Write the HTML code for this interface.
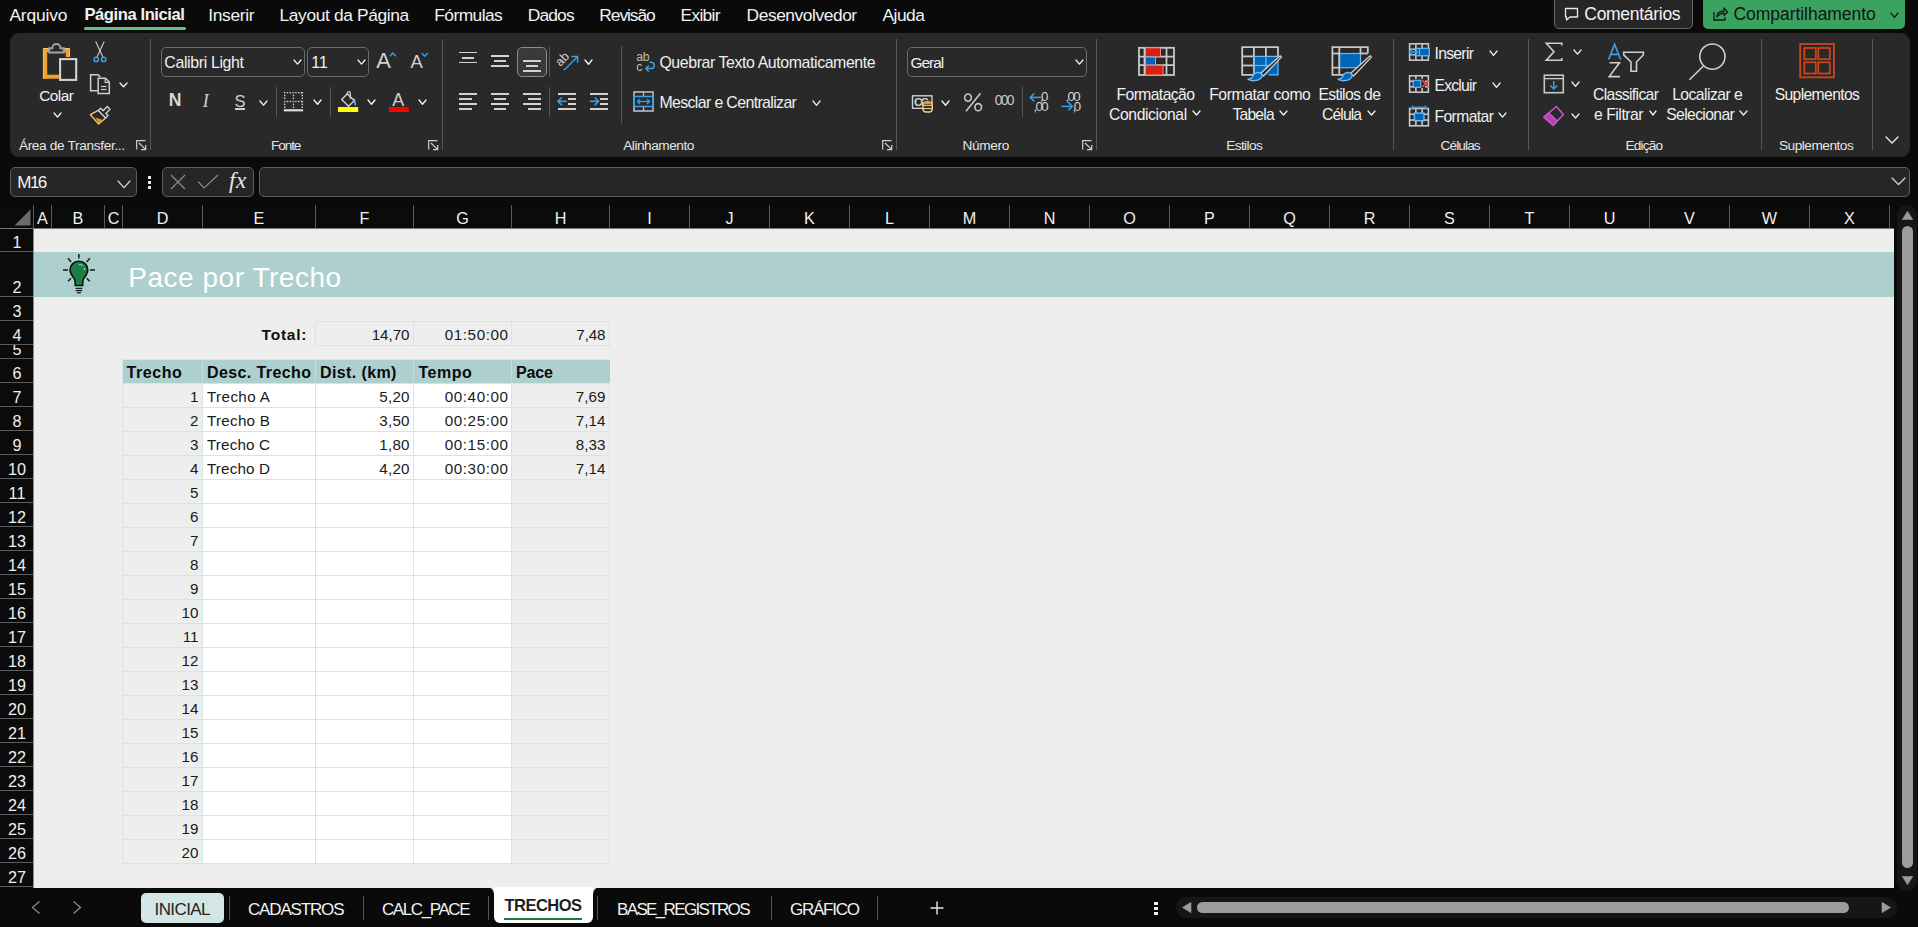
<!DOCTYPE html>
<html><head><meta charset="utf-8"><title>Excel</title>
<style>
html,body{margin:0;padding:0;width:1918px;height:927px;overflow:hidden;background:#0a0a0a;font-family:"Liberation Sans",sans-serif}
.t{position:absolute;line-height:1;white-space:nowrap}
svg{overflow:visible}
</style></head><body>
<div class="t" style="left:9.40px;top:6.81px;font-size:17.4px;color:#f2f2f2;letter-spacing:-0.166px;">Arquivo</div><div class="t" style="left:84.40px;top:7.49px;font-size:16.6px;color:#f2f2f2;font-weight:bold;letter-spacing:-0.423px;">Página Inicial</div><div class="t" style="left:208.20px;top:6.81px;font-size:17.4px;color:#f2f2f2;letter-spacing:-0.307px;">Inserir</div><div class="t" style="left:279.50px;top:6.81px;font-size:17.4px;color:#f2f2f2;letter-spacing:-0.376px;">Layout da Página</div><div class="t" style="left:434.30px;top:6.81px;font-size:17.4px;color:#f2f2f2;letter-spacing:-0.574px;">Fórmulas</div><div class="t" style="left:527.70px;top:6.81px;font-size:17.4px;color:#f2f2f2;letter-spacing:-0.824px;">Dados</div><div class="t" style="left:599.30px;top:6.81px;font-size:17.4px;color:#f2f2f2;letter-spacing:-1.06px;">Revisão</div><div class="t" style="left:680.50px;top:6.81px;font-size:17.4px;color:#f2f2f2;letter-spacing:-0.702px;">Exibir</div><div class="t" style="left:746.60px;top:6.81px;font-size:17.4px;color:#f2f2f2;letter-spacing:-0.455px;">Desenvolvedor</div><div class="t" style="left:882.40px;top:6.81px;font-size:17.4px;color:#f2f2f2;letter-spacing:-0.476px;">Ajuda</div><div style="position:absolute;left:84px;top:27px;width:102px;height:3px;background:#5fc386;border-radius:2px"></div><div style="position:absolute;left:1554px;top:-6px;width:139px;height:35px;background:#262626;border:1px solid #6a6a6a;border-radius:5px;box-sizing:border-box"></div><svg style="position:absolute;left:1564px;top:7px" width="15" height="14" viewBox="0 0 15 14"><path d="M1.5 1.5h12v8.5h-7.5l-3.5 3v-3h-1z" fill="none" stroke="#e8e8e8" stroke-width="1.3" stroke-linejoin="round"/></svg><div class="t" style="left:1584.30px;top:5.52px;font-size:17.5px;color:#f2f2f2;letter-spacing:-0.291px;">Comentários</div><div style="position:absolute;left:1703px;top:-6px;width:202px;height:35px;background:#3aa35f;border-radius:5px"></div><svg style="position:absolute;left:1713px;top:6px" width="15" height="15" viewBox="0 0 15 15"><path d="M1 6v8h11v-3" fill="none" stroke="#1a1a1a" stroke-width="1.3"/><path d="M4 11c0-4 3-6 7-6V2l3.5 4L11 9.5V7c-3 0-5 1.5-7 4z" fill="none" stroke="#1a1a1a" stroke-width="1.3" stroke-linejoin="round"/></svg><div class="t" style="left:1733.50px;top:5.52px;font-size:17.5px;color:#141414;letter-spacing:-0.046px;">Compartilhamento</div><svg style="position:absolute;left:1891px;top:12.5px" width="7" height="4.300000000000001" viewBox="0 0 7 4.300000000000001"><polyline points="0,0 3.5,4.300000000000001 7,0" fill="none" stroke="#1a1a1a" stroke-width="1.3" stroke-linecap="round" stroke-linejoin="round"/></svg><div style="position:absolute;left:10px;top:33px;width:1900px;height:124px;background:#292929;border-radius:9px"></div><div style="position:absolute;left:150px;top:39px;width:1px;height:111px;background:#555555;"></div><div style="position:absolute;left:442px;top:39px;width:1px;height:111px;background:#555555;"></div><div style="position:absolute;left:896px;top:39px;width:1px;height:111px;background:#555555;"></div><div style="position:absolute;left:1096px;top:39px;width:1px;height:111px;background:#555555;"></div><div style="position:absolute;left:1393px;top:39px;width:1px;height:111px;background:#555555;"></div><div style="position:absolute;left:1528px;top:39px;width:1px;height:111px;background:#555555;"></div><div style="position:absolute;left:1761px;top:39px;width:1px;height:111px;background:#555555;"></div><div style="position:absolute;left:1872px;top:39px;width:1px;height:111px;background:#555555;"></div><div style="position:absolute;left:10px;top:167px;width:127px;height:30px;background:#262626;background:#262626;border:1px solid #5c5c5c;border-radius:5px;box-sizing:border-box"></div><div class="t" style="left:17.30px;top:173.85px;font-size:17px;color:#f2f2f2;letter-spacing:-1.535px;">M16</div><svg style="position:absolute;left:117.5px;top:180.5px" width="12.0" height="6.699999999999989" viewBox="0 0 12.0 6.699999999999989"><polyline points="0,0 6.0,6.699999999999989 12.0,0" fill="none" stroke="#d8d8d8" stroke-width="1.2" stroke-linecap="round" stroke-linejoin="round"/></svg><div style="position:absolute;left:148px;top:176px;width:3px;height:3px;background:#e8e8e8;"></div><div style="position:absolute;left:148px;top:181px;width:3px;height:3px;background:#e8e8e8;"></div><div style="position:absolute;left:148px;top:186px;width:3px;height:3px;background:#e8e8e8;"></div><div style="position:absolute;left:162px;top:167px;width:92px;height:30px;background:#262626;background:#262626;border:1px solid #5c5c5c;border-radius:5px;box-sizing:border-box"></div><svg style="position:absolute;left:170px;top:174px" width="16" height="16" viewBox="0 0 16 16"><path d="M1 1L15 15M15 1L1 15" stroke="#8a8a8a" stroke-width="1.2" fill="none"/></svg><svg style="position:absolute;left:197px;top:174px" width="22" height="15" viewBox="0 0 22 15"><path d="M1 7.5L7 14L21 1" stroke="#8a8a8a" stroke-width="1.2" fill="none"/></svg><div class="t" style="left:229.00px;top:168.85px;font-size:23px;color:#e8e8e8;font-family:'Liberation Serif';font-style:italic;letter-spacing:0.6px;">fx</div><div style="position:absolute;left:259px;top:167px;width:1651px;height:30px;background:#262626;background:#262626;border:1px solid #5c5c5c;border-radius:5px;box-sizing:border-box"></div><svg style="position:absolute;left:1891.5px;top:177.5px" width="13.0" height="6.5" viewBox="0 0 13.0 6.5"><polyline points="0,0 6.5,6.5 13.0,0" fill="none" stroke="#d8d8d8" stroke-width="1.2" stroke-linecap="round" stroke-linejoin="round"/></svg><div style="position:absolute;left:0px;top:205px;width:1894px;height:24px;background:#0b0b0b;"></div><svg style="position:absolute;left:14px;top:209px" width="17" height="17" viewBox="0 0 17 17"><path d="M16.5 0.5V16.5H0.5Z" fill="#6b6b6b"/></svg><div style="position:absolute;left:33px;top:205px;width:1px;height:23px;background:#5a5a5a;"></div><div class="t" style="left:42.50px;top:209.83px;font-size:16.2px;color:#f0f0f0;transform:translateX(-50%);">A</div><div style="position:absolute;left:51px;top:205px;width:1px;height:23px;background:#5a5a5a;"></div><div class="t" style="left:78.00px;top:209.83px;font-size:16.2px;color:#f0f0f0;transform:translateX(-50%);">B</div><div style="position:absolute;left:104px;top:205px;width:1px;height:23px;background:#5a5a5a;"></div><div class="t" style="left:113.50px;top:209.83px;font-size:16.2px;color:#f0f0f0;transform:translateX(-50%);">C</div><div style="position:absolute;left:122px;top:205px;width:1px;height:23px;background:#5a5a5a;"></div><div class="t" style="left:162.50px;top:209.83px;font-size:16.2px;color:#f0f0f0;transform:translateX(-50%);">D</div><div style="position:absolute;left:202px;top:205px;width:1px;height:23px;background:#5a5a5a;"></div><div class="t" style="left:259.00px;top:209.83px;font-size:16.2px;color:#f0f0f0;transform:translateX(-50%);">E</div><div style="position:absolute;left:315px;top:205px;width:1px;height:23px;background:#5a5a5a;"></div><div class="t" style="left:364.50px;top:209.83px;font-size:16.2px;color:#f0f0f0;transform:translateX(-50%);">F</div><div style="position:absolute;left:413px;top:205px;width:1px;height:23px;background:#5a5a5a;"></div><div class="t" style="left:462.50px;top:209.83px;font-size:16.2px;color:#f0f0f0;transform:translateX(-50%);">G</div><div style="position:absolute;left:511px;top:205px;width:1px;height:23px;background:#5a5a5a;"></div><div class="t" style="left:560.50px;top:209.83px;font-size:16.2px;color:#f0f0f0;transform:translateX(-50%);">H</div><div style="position:absolute;left:609px;top:205px;width:1px;height:23px;background:#5a5a5a;"></div><div class="t" style="left:649.50px;top:209.83px;font-size:16.2px;color:#f0f0f0;transform:translateX(-50%);">I</div><div style="position:absolute;left:689px;top:205px;width:1px;height:23px;background:#5a5a5a;"></div><div class="t" style="left:729.50px;top:209.83px;font-size:16.2px;color:#f0f0f0;transform:translateX(-50%);">J</div><div style="position:absolute;left:769px;top:205px;width:1px;height:23px;background:#5a5a5a;"></div><div class="t" style="left:809.50px;top:209.83px;font-size:16.2px;color:#f0f0f0;transform:translateX(-50%);">K</div><div style="position:absolute;left:849px;top:205px;width:1px;height:23px;background:#5a5a5a;"></div><div class="t" style="left:889.50px;top:209.83px;font-size:16.2px;color:#f0f0f0;transform:translateX(-50%);">L</div><div style="position:absolute;left:929px;top:205px;width:1px;height:23px;background:#5a5a5a;"></div><div class="t" style="left:969.50px;top:209.83px;font-size:16.2px;color:#f0f0f0;transform:translateX(-50%);">M</div><div style="position:absolute;left:1009px;top:205px;width:1px;height:23px;background:#5a5a5a;"></div><div class="t" style="left:1049.50px;top:209.83px;font-size:16.2px;color:#f0f0f0;transform:translateX(-50%);">N</div><div style="position:absolute;left:1089px;top:205px;width:1px;height:23px;background:#5a5a5a;"></div><div class="t" style="left:1129.50px;top:209.83px;font-size:16.2px;color:#f0f0f0;transform:translateX(-50%);">O</div><div style="position:absolute;left:1169px;top:205px;width:1px;height:23px;background:#5a5a5a;"></div><div class="t" style="left:1209.50px;top:209.83px;font-size:16.2px;color:#f0f0f0;transform:translateX(-50%);">P</div><div style="position:absolute;left:1249px;top:205px;width:1px;height:23px;background:#5a5a5a;"></div><div class="t" style="left:1289.50px;top:209.83px;font-size:16.2px;color:#f0f0f0;transform:translateX(-50%);">Q</div><div style="position:absolute;left:1329px;top:205px;width:1px;height:23px;background:#5a5a5a;"></div><div class="t" style="left:1369.50px;top:209.83px;font-size:16.2px;color:#f0f0f0;transform:translateX(-50%);">R</div><div style="position:absolute;left:1409px;top:205px;width:1px;height:23px;background:#5a5a5a;"></div><div class="t" style="left:1449.50px;top:209.83px;font-size:16.2px;color:#f0f0f0;transform:translateX(-50%);">S</div><div style="position:absolute;left:1489px;top:205px;width:1px;height:23px;background:#5a5a5a;"></div><div class="t" style="left:1529.50px;top:209.83px;font-size:16.2px;color:#f0f0f0;transform:translateX(-50%);">T</div><div style="position:absolute;left:1569px;top:205px;width:1px;height:23px;background:#5a5a5a;"></div><div class="t" style="left:1609.50px;top:209.83px;font-size:16.2px;color:#f0f0f0;transform:translateX(-50%);">U</div><div style="position:absolute;left:1649px;top:205px;width:1px;height:23px;background:#5a5a5a;"></div><div class="t" style="left:1689.50px;top:209.83px;font-size:16.2px;color:#f0f0f0;transform:translateX(-50%);">V</div><div style="position:absolute;left:1729px;top:205px;width:1px;height:23px;background:#5a5a5a;"></div><div class="t" style="left:1769.50px;top:209.83px;font-size:16.2px;color:#f0f0f0;transform:translateX(-50%);">W</div><div style="position:absolute;left:1809px;top:205px;width:1px;height:23px;background:#5a5a5a;"></div><div class="t" style="left:1849.50px;top:209.83px;font-size:16.2px;color:#f0f0f0;transform:translateX(-50%);">X</div><div style="position:absolute;left:1889px;top:205px;width:1px;height:23px;background:#5a5a5a;"></div><div style="position:absolute;left:0px;top:228px;width:1894px;height:1px;background:#777777;"></div><div style="position:absolute;left:0px;top:229px;width:33px;height:659px;background:#0b0b0b;"></div><div style="position:absolute;left:0;top:229px;width:33px;height:23px;overflow:hidden"><div class="t" style="left:0;width:33px;text-align:center;top:4.63px;font-size:16.2px;color:#f0f0f0;padding-left:1px;box-sizing:border-box">1</div></div><div style="position:absolute;left:0px;top:251px;width:33px;height:1px;background:#5c5c5c;"></div><div style="position:absolute;left:0;top:252px;width:33px;height:45px;overflow:hidden"><div class="t" style="left:0;width:33px;text-align:center;top:26.63px;font-size:16.2px;color:#f0f0f0;padding-left:1px;box-sizing:border-box">2</div></div><div style="position:absolute;left:0px;top:296px;width:33px;height:1px;background:#5c5c5c;"></div><div style="position:absolute;left:0;top:297px;width:33px;height:24px;overflow:hidden"><div class="t" style="left:0;width:33px;text-align:center;top:5.63px;font-size:16.2px;color:#f0f0f0;padding-left:1px;box-sizing:border-box">3</div></div><div style="position:absolute;left:0px;top:320px;width:33px;height:1px;background:#5c5c5c;"></div><div style="position:absolute;left:0;top:321px;width:33px;height:24px;overflow:hidden"><div class="t" style="left:0;width:33px;text-align:center;top:5.63px;font-size:16.2px;color:#f0f0f0;padding-left:1px;box-sizing:border-box">4</div></div><div style="position:absolute;left:0px;top:344px;width:33px;height:1px;background:#5c5c5c;"></div><div style="position:absolute;left:0;top:345px;width:33px;height:14px;overflow:hidden"><div class="t" style="left:0;width:33px;text-align:center;top:-4.37px;font-size:16.2px;color:#f0f0f0;padding-left:1px;box-sizing:border-box">5</div></div><div style="position:absolute;left:0px;top:358px;width:33px;height:1px;background:#5c5c5c;"></div><div style="position:absolute;left:0;top:359px;width:33px;height:24px;overflow:hidden"><div class="t" style="left:0;width:33px;text-align:center;top:5.63px;font-size:16.2px;color:#f0f0f0;padding-left:1px;box-sizing:border-box">6</div></div><div style="position:absolute;left:0px;top:382px;width:33px;height:1px;background:#5c5c5c;"></div><div style="position:absolute;left:0;top:383px;width:33px;height:24px;overflow:hidden"><div class="t" style="left:0;width:33px;text-align:center;top:5.63px;font-size:16.2px;color:#f0f0f0;padding-left:1px;box-sizing:border-box">7</div></div><div style="position:absolute;left:0px;top:406px;width:33px;height:1px;background:#5c5c5c;"></div><div style="position:absolute;left:0;top:407px;width:33px;height:24px;overflow:hidden"><div class="t" style="left:0;width:33px;text-align:center;top:5.63px;font-size:16.2px;color:#f0f0f0;padding-left:1px;box-sizing:border-box">8</div></div><div style="position:absolute;left:0px;top:430px;width:33px;height:1px;background:#5c5c5c;"></div><div style="position:absolute;left:0;top:431px;width:33px;height:24px;overflow:hidden"><div class="t" style="left:0;width:33px;text-align:center;top:5.63px;font-size:16.2px;color:#f0f0f0;padding-left:1px;box-sizing:border-box">9</div></div><div style="position:absolute;left:0px;top:454px;width:33px;height:1px;background:#5c5c5c;"></div><div style="position:absolute;left:0;top:455px;width:33px;height:24px;overflow:hidden"><div class="t" style="left:0;width:33px;text-align:center;top:5.63px;font-size:16.2px;color:#f0f0f0;padding-left:1px;box-sizing:border-box">10</div></div><div style="position:absolute;left:0px;top:478px;width:33px;height:1px;background:#5c5c5c;"></div><div style="position:absolute;left:0;top:479px;width:33px;height:24px;overflow:hidden"><div class="t" style="left:0;width:33px;text-align:center;top:5.63px;font-size:16.2px;color:#f0f0f0;padding-left:1px;box-sizing:border-box">11</div></div><div style="position:absolute;left:0px;top:502px;width:33px;height:1px;background:#5c5c5c;"></div><div style="position:absolute;left:0;top:503px;width:33px;height:24px;overflow:hidden"><div class="t" style="left:0;width:33px;text-align:center;top:5.63px;font-size:16.2px;color:#f0f0f0;padding-left:1px;box-sizing:border-box">12</div></div><div style="position:absolute;left:0px;top:526px;width:33px;height:1px;background:#5c5c5c;"></div><div style="position:absolute;left:0;top:527px;width:33px;height:24px;overflow:hidden"><div class="t" style="left:0;width:33px;text-align:center;top:5.63px;font-size:16.2px;color:#f0f0f0;padding-left:1px;box-sizing:border-box">13</div></div><div style="position:absolute;left:0px;top:550px;width:33px;height:1px;background:#5c5c5c;"></div><div style="position:absolute;left:0;top:551px;width:33px;height:24px;overflow:hidden"><div class="t" style="left:0;width:33px;text-align:center;top:5.63px;font-size:16.2px;color:#f0f0f0;padding-left:1px;box-sizing:border-box">14</div></div><div style="position:absolute;left:0px;top:574px;width:33px;height:1px;background:#5c5c5c;"></div><div style="position:absolute;left:0;top:575px;width:33px;height:24px;overflow:hidden"><div class="t" style="left:0;width:33px;text-align:center;top:5.63px;font-size:16.2px;color:#f0f0f0;padding-left:1px;box-sizing:border-box">15</div></div><div style="position:absolute;left:0px;top:598px;width:33px;height:1px;background:#5c5c5c;"></div><div style="position:absolute;left:0;top:599px;width:33px;height:24px;overflow:hidden"><div class="t" style="left:0;width:33px;text-align:center;top:5.63px;font-size:16.2px;color:#f0f0f0;padding-left:1px;box-sizing:border-box">16</div></div><div style="position:absolute;left:0px;top:622px;width:33px;height:1px;background:#5c5c5c;"></div><div style="position:absolute;left:0;top:623px;width:33px;height:24px;overflow:hidden"><div class="t" style="left:0;width:33px;text-align:center;top:5.63px;font-size:16.2px;color:#f0f0f0;padding-left:1px;box-sizing:border-box">17</div></div><div style="position:absolute;left:0px;top:646px;width:33px;height:1px;background:#5c5c5c;"></div><div style="position:absolute;left:0;top:647px;width:33px;height:24px;overflow:hidden"><div class="t" style="left:0;width:33px;text-align:center;top:5.63px;font-size:16.2px;color:#f0f0f0;padding-left:1px;box-sizing:border-box">18</div></div><div style="position:absolute;left:0px;top:670px;width:33px;height:1px;background:#5c5c5c;"></div><div style="position:absolute;left:0;top:671px;width:33px;height:24px;overflow:hidden"><div class="t" style="left:0;width:33px;text-align:center;top:5.63px;font-size:16.2px;color:#f0f0f0;padding-left:1px;box-sizing:border-box">19</div></div><div style="position:absolute;left:0px;top:694px;width:33px;height:1px;background:#5c5c5c;"></div><div style="position:absolute;left:0;top:695px;width:33px;height:24px;overflow:hidden"><div class="t" style="left:0;width:33px;text-align:center;top:5.63px;font-size:16.2px;color:#f0f0f0;padding-left:1px;box-sizing:border-box">20</div></div><div style="position:absolute;left:0px;top:718px;width:33px;height:1px;background:#5c5c5c;"></div><div style="position:absolute;left:0;top:719px;width:33px;height:24px;overflow:hidden"><div class="t" style="left:0;width:33px;text-align:center;top:5.63px;font-size:16.2px;color:#f0f0f0;padding-left:1px;box-sizing:border-box">21</div></div><div style="position:absolute;left:0px;top:742px;width:33px;height:1px;background:#5c5c5c;"></div><div style="position:absolute;left:0;top:743px;width:33px;height:24px;overflow:hidden"><div class="t" style="left:0;width:33px;text-align:center;top:5.63px;font-size:16.2px;color:#f0f0f0;padding-left:1px;box-sizing:border-box">22</div></div><div style="position:absolute;left:0px;top:766px;width:33px;height:1px;background:#5c5c5c;"></div><div style="position:absolute;left:0;top:767px;width:33px;height:24px;overflow:hidden"><div class="t" style="left:0;width:33px;text-align:center;top:5.63px;font-size:16.2px;color:#f0f0f0;padding-left:1px;box-sizing:border-box">23</div></div><div style="position:absolute;left:0px;top:790px;width:33px;height:1px;background:#5c5c5c;"></div><div style="position:absolute;left:0;top:791px;width:33px;height:24px;overflow:hidden"><div class="t" style="left:0;width:33px;text-align:center;top:5.63px;font-size:16.2px;color:#f0f0f0;padding-left:1px;box-sizing:border-box">24</div></div><div style="position:absolute;left:0px;top:814px;width:33px;height:1px;background:#5c5c5c;"></div><div style="position:absolute;left:0;top:815px;width:33px;height:24px;overflow:hidden"><div class="t" style="left:0;width:33px;text-align:center;top:5.63px;font-size:16.2px;color:#f0f0f0;padding-left:1px;box-sizing:border-box">25</div></div><div style="position:absolute;left:0px;top:838px;width:33px;height:1px;background:#5c5c5c;"></div><div style="position:absolute;left:0;top:839px;width:33px;height:24px;overflow:hidden"><div class="t" style="left:0;width:33px;text-align:center;top:5.63px;font-size:16.2px;color:#f0f0f0;padding-left:1px;box-sizing:border-box">26</div></div><div style="position:absolute;left:0px;top:862px;width:33px;height:1px;background:#5c5c5c;"></div><div style="position:absolute;left:0;top:863px;width:33px;height:24px;overflow:hidden"><div class="t" style="left:0;width:33px;text-align:center;top:5.63px;font-size:16.2px;color:#f0f0f0;padding-left:1px;box-sizing:border-box">27</div></div><div style="position:absolute;left:0px;top:886px;width:33px;height:1px;background:#5c5c5c;"></div><div style="position:absolute;left:33px;top:229px;width:1px;height:659px;background:#8a8a8a;"></div><div style="position:absolute;left:34px;top:229px;width:1860px;height:659px;background:#eeeeee;"></div><div style="position:absolute;left:34px;top:252px;width:1860px;height:45px;background:#adcfce;"></div><svg style="position:absolute;left:58px;top:252px" width="42" height="45" viewBox="0 0 42 45">
<g stroke="#222" stroke-width="1.6" stroke-linecap="butt">
<line x1="20.9" y1="2" x2="20.9" y2="6.6"/>
<line x1="5" y1="18" x2="10" y2="18"/><line x1="32" y1="18" x2="37" y2="18"/>
<line x1="10" y1="6.3" x2="13.1" y2="10"/><line x1="31.8" y1="6.3" x2="28.7" y2="10"/>
<line x1="10" y1="29.3" x2="13.1" y2="26.2"/><line x1="31.8" y1="29.3" x2="28.7" y2="26.2"/>
</g>
<path d="M20.9 9.3 C15.6 9.3 12 13.2 12 18 C12 21.5 14 23.5 16 26.2 C17 27.6 17.2 29 17.2 31 L17.2 33.6 L24.7 33.6 L24.7 31 C24.7 29 24.9 27.6 25.9 26.2 C27.9 23.5 29.8 21.5 29.8 18 C29.8 13.2 26.2 9.3 20.9 9.3 Z" fill="#1a7f48" stroke="#0c0c0c" stroke-width="1.5"/>
<path d="M21 12.5 C23 12.6 24.3 13.2 25.2 14.2" stroke="#cfe8d8" stroke-width="0.9" fill="none"/>
<path d="M26.3 16 L26.8 18.2" stroke="#cfe8d8" stroke-width="0.9" fill="none"/>
<g stroke="#1e1e1e" stroke-width="1.3"><line x1="17.6" y1="36.4" x2="24.2" y2="36.4"/><line x1="17.6" y1="38.6" x2="24.2" y2="38.6"/><line x1="19" y1="40.8" x2="22.8" y2="40.8"/></g>
</svg><div class="t" style="left:128.20px;top:263.80px;font-size:28px;color:#ffffff;letter-spacing:0.539px;">Pace por Trecho</div><div class="t" style="right:1610.73px;top:327.02px;font-size:15.5px;color:#111;font-weight:bold;letter-spacing:0.773px;">Total:</div><div style="position:absolute;left:315px;top:321px;width:295px;height:25px;background:transparent;border:1px solid #d3e6e5;box-sizing:border-box"></div><div style="position:absolute;left:413px;top:321px;width:1px;height:25px;background:#d3e6e5;"></div><div style="position:absolute;left:511px;top:321px;width:1px;height:25px;background:#d3e6e5;"></div><div class="t" style="right:1508.53px;top:327.28px;font-size:15.2px;color:#1a1a1a;letter-spacing:-0.034px;">14,70</div><div class="t" style="right:1409.39px;top:327.28px;font-size:15.2px;color:#1a1a1a;letter-spacing:0.605px;">01:50:00</div><div class="t" style="right:1312.63px;top:327.28px;font-size:15.2px;color:#1a1a1a;letter-spacing:-0.128px;">7,48</div><div style="position:absolute;left:122px;top:359px;width:488px;height:1px;background:#d3e6e5;"></div><div style="position:absolute;left:122px;top:359px;width:1px;height:24px;background:#d3e6e5;"></div><div style="position:absolute;left:123px;top:360px;width:487px;height:23px;background:#adcfce;"></div><div style="position:absolute;left:202px;top:359px;width:1px;height:24px;background:#c2dcdb;"></div><div style="position:absolute;left:315px;top:359px;width:1px;height:24px;background:#c2dcdb;"></div><div style="position:absolute;left:413px;top:359px;width:1px;height:24px;background:#c2dcdb;"></div><div style="position:absolute;left:511px;top:359px;width:1px;height:24px;background:#c2dcdb;"></div><div class="t" style="left:126.50px;top:364.60px;font-size:16px;color:#0a0a0a;font-weight:bold;letter-spacing:0.568px;">Trecho</div><div class="t" style="left:207.00px;top:364.60px;font-size:16px;color:#0a0a0a;font-weight:bold;letter-spacing:0.4px;">Desc. Trecho</div><div class="t" style="left:320.00px;top:364.60px;font-size:16px;color:#0a0a0a;font-weight:bold;letter-spacing:0.389px;">Dist. (km)</div><div class="t" style="left:418.50px;top:364.60px;font-size:16px;color:#0a0a0a;font-weight:bold;letter-spacing:0.51px;">Tempo</div><div class="t" style="left:516.00px;top:364.60px;font-size:16px;color:#0a0a0a;font-weight:bold;letter-spacing:-0.189px;">Pace</div><div style="position:absolute;left:202px;top:383px;width:309px;height:480px;background:#ffffff;"></div><div style="position:absolute;left:122px;top:383px;width:488px;height:1px;background:#d3e6e5;"></div><div style="position:absolute;left:122px;top:407px;width:488px;height:1px;background:#d3e6e5;"></div><div style="position:absolute;left:122px;top:431px;width:488px;height:1px;background:#d3e6e5;"></div><div style="position:absolute;left:122px;top:455px;width:488px;height:1px;background:#d3e6e5;"></div><div style="position:absolute;left:122px;top:479px;width:488px;height:1px;background:#d3e6e5;"></div><div style="position:absolute;left:122px;top:503px;width:488px;height:1px;background:#d3e6e5;"></div><div style="position:absolute;left:122px;top:527px;width:488px;height:1px;background:#d3e6e5;"></div><div style="position:absolute;left:122px;top:551px;width:488px;height:1px;background:#d3e6e5;"></div><div style="position:absolute;left:122px;top:575px;width:488px;height:1px;background:#d3e6e5;"></div><div style="position:absolute;left:122px;top:599px;width:488px;height:1px;background:#d3e6e5;"></div><div style="position:absolute;left:122px;top:623px;width:488px;height:1px;background:#d3e6e5;"></div><div style="position:absolute;left:122px;top:647px;width:488px;height:1px;background:#d3e6e5;"></div><div style="position:absolute;left:122px;top:671px;width:488px;height:1px;background:#d3e6e5;"></div><div style="position:absolute;left:122px;top:695px;width:488px;height:1px;background:#d3e6e5;"></div><div style="position:absolute;left:122px;top:719px;width:488px;height:1px;background:#d3e6e5;"></div><div style="position:absolute;left:122px;top:743px;width:488px;height:1px;background:#d3e6e5;"></div><div style="position:absolute;left:122px;top:767px;width:488px;height:1px;background:#d3e6e5;"></div><div style="position:absolute;left:122px;top:791px;width:488px;height:1px;background:#d3e6e5;"></div><div style="position:absolute;left:122px;top:815px;width:488px;height:1px;background:#d3e6e5;"></div><div style="position:absolute;left:122px;top:839px;width:488px;height:1px;background:#d3e6e5;"></div><div style="position:absolute;left:122px;top:863px;width:488px;height:1px;background:#d3e6e5;"></div><div style="position:absolute;left:122px;top:383px;width:1px;height:480px;background:#d3e6e5;"></div><div style="position:absolute;left:202px;top:383px;width:1px;height:480px;background:#d3e6e5;"></div><div style="position:absolute;left:315px;top:383px;width:1px;height:480px;background:#d3e6e5;"></div><div style="position:absolute;left:413px;top:383px;width:1px;height:480px;background:#d3e6e5;"></div><div style="position:absolute;left:511px;top:383px;width:1px;height:480px;background:#d3e6e5;"></div><div style="position:absolute;left:609px;top:383px;width:1px;height:480px;background:#d3e6e5;"></div><div class="t" style="right:1719.50px;top:389.08px;font-size:15.2px;color:#1a1a1a;">1</div><div class="t" style="left:207.00px;top:389.08px;font-size:15.2px;color:#1a1a1a;letter-spacing:0.391px;">Trecho A</div><div class="t" style="right:1508.30px;top:389.08px;font-size:15.2px;color:#1a1a1a;letter-spacing:0.205px;">5,20</div><div class="t" style="right:1409.39px;top:389.08px;font-size:15.2px;color:#1a1a1a;letter-spacing:0.605px;">00:40:00</div><div class="t" style="right:1312.43px;top:389.08px;font-size:15.2px;color:#1a1a1a;letter-spacing:0.072px;">7,69</div><div class="t" style="right:1719.50px;top:413.08px;font-size:15.2px;color:#1a1a1a;">2</div><div class="t" style="left:207.00px;top:413.08px;font-size:15.2px;color:#1a1a1a;letter-spacing:0.271px;">Trecho B</div><div class="t" style="right:1508.30px;top:413.08px;font-size:15.2px;color:#1a1a1a;letter-spacing:0.205px;">3,50</div><div class="t" style="right:1409.39px;top:413.08px;font-size:15.2px;color:#1a1a1a;letter-spacing:0.605px;">00:25:00</div><div class="t" style="right:1312.43px;top:413.08px;font-size:15.2px;color:#1a1a1a;letter-spacing:0.072px;">7,14</div><div class="t" style="right:1719.50px;top:437.08px;font-size:15.2px;color:#1a1a1a;">3</div><div class="t" style="left:207.00px;top:437.08px;font-size:15.2px;color:#1a1a1a;letter-spacing:0.151px;">Trecho C</div><div class="t" style="right:1508.30px;top:437.08px;font-size:15.2px;color:#1a1a1a;letter-spacing:0.205px;">1,80</div><div class="t" style="right:1409.39px;top:437.08px;font-size:15.2px;color:#1a1a1a;letter-spacing:0.605px;">00:15:00</div><div class="t" style="right:1312.43px;top:437.08px;font-size:15.2px;color:#1a1a1a;letter-spacing:0.072px;">8,33</div><div class="t" style="right:1719.50px;top:461.08px;font-size:15.2px;color:#1a1a1a;">4</div><div class="t" style="left:207.00px;top:461.08px;font-size:15.2px;color:#1a1a1a;letter-spacing:0.151px;">Trecho D</div><div class="t" style="right:1508.30px;top:461.08px;font-size:15.2px;color:#1a1a1a;letter-spacing:0.205px;">4,20</div><div class="t" style="right:1409.39px;top:461.08px;font-size:15.2px;color:#1a1a1a;letter-spacing:0.605px;">00:30:00</div><div class="t" style="right:1312.43px;top:461.08px;font-size:15.2px;color:#1a1a1a;letter-spacing:0.072px;">7,14</div><div class="t" style="right:1719.50px;top:485.08px;font-size:15.2px;color:#1a1a1a;">5</div><div class="t" style="right:1719.50px;top:509.08px;font-size:15.2px;color:#1a1a1a;">6</div><div class="t" style="right:1719.50px;top:533.08px;font-size:15.2px;color:#1a1a1a;">7</div><div class="t" style="right:1719.50px;top:557.08px;font-size:15.2px;color:#1a1a1a;">8</div><div class="t" style="right:1719.50px;top:581.08px;font-size:15.2px;color:#1a1a1a;">9</div><div class="t" style="right:1719.50px;top:605.08px;font-size:15.2px;color:#1a1a1a;">10</div><div class="t" style="right:1719.50px;top:629.08px;font-size:15.2px;color:#1a1a1a;">11</div><div class="t" style="right:1719.50px;top:653.08px;font-size:15.2px;color:#1a1a1a;">12</div><div class="t" style="right:1719.50px;top:677.08px;font-size:15.2px;color:#1a1a1a;">13</div><div class="t" style="right:1719.50px;top:701.08px;font-size:15.2px;color:#1a1a1a;">14</div><div class="t" style="right:1719.50px;top:725.08px;font-size:15.2px;color:#1a1a1a;">15</div><div class="t" style="right:1719.50px;top:749.08px;font-size:15.2px;color:#1a1a1a;">16</div><div class="t" style="right:1719.50px;top:773.08px;font-size:15.2px;color:#1a1a1a;">17</div><div class="t" style="right:1719.50px;top:797.08px;font-size:15.2px;color:#1a1a1a;">18</div><div class="t" style="right:1719.50px;top:821.08px;font-size:15.2px;color:#1a1a1a;">19</div><div class="t" style="right:1719.50px;top:845.08px;font-size:15.2px;color:#1a1a1a;">20</div><div style="position:absolute;left:0px;top:888px;width:1918px;height:39px;background:#0a0a0a;"></div><svg style="position:absolute;left:31px;top:901px" width="10" height="13" viewBox="0 0 10 13"><polyline points="8.5,0.5 1.5,6.5 8.5,12.5" fill="none" stroke="#8a8a8a" stroke-width="1.3"/></svg><svg style="position:absolute;left:72px;top:901px" width="10" height="13" viewBox="0 0 10 13"><polyline points="1.5,0.5 8.5,6.5 1.5,12.5" fill="none" stroke="#8a8a8a" stroke-width="1.3"/></svg><div style="position:absolute;left:141px;top:893px;width:83px;height:30px;background:#d3e6e5;border-radius:5px"></div><div class="t" style="left:154.50px;top:901.15px;font-size:17px;color:#1e1e1e;letter-spacing:-0.586px;">INICIAL</div><div style="position:absolute;left:229px;top:896px;width:1px;height:24px;background:#555555;"></div><div style="position:absolute;left:363px;top:896px;width:1px;height:24px;background:#555555;"></div><div style="position:absolute;left:488px;top:896px;width:1px;height:24px;background:#555555;"></div><div style="position:absolute;left:597px;top:896px;width:1px;height:24px;background:#555555;"></div><div style="position:absolute;left:771px;top:896px;width:1px;height:24px;background:#555555;"></div><div style="position:absolute;left:877px;top:896px;width:1px;height:24px;background:#555555;"></div><div class="t" style="left:248.00px;top:901.15px;font-size:17px;color:#f2f2f2;letter-spacing:-1.162px;">CADASTROS</div><div class="t" style="left:382.00px;top:901.15px;font-size:17px;color:#f2f2f2;letter-spacing:-1.417px;">CALC_PACE</div><div class="t" style="left:617.00px;top:901.15px;font-size:17px;color:#f2f2f2;letter-spacing:-1.649px;">BASE_REGISTROS</div><div class="t" style="left:790.00px;top:901.15px;font-size:17px;color:#f2f2f2;letter-spacing:-1.241px;">GRÁFICO</div><div style="position:absolute;left:494px;top:887px;width:99px;height:36px;background:#ffffff;border-radius:0 0 6px 6px"></div><svg style="position:absolute;left:487px;top:887px" width="7" height="7" viewBox="0 0 7 7"><path d="M0 0H7V7A7 7 0 0 0 0 0Z" fill="#eeeeee"/></svg><svg style="position:absolute;left:593px;top:887px" width="7" height="7" viewBox="0 0 7 7"><path d="M7 0H0V7A7 7 0 0 1 7 0Z" fill="#eeeeee"/></svg><div class="t" style="left:504.50px;top:897.48px;font-size:16.5px;color:#1e1e1e;font-weight:bold;letter-spacing:-0.529px;">TRECHOS</div><div style="position:absolute;left:504px;top:918px;width:78px;height:2px;background:#1e7b3e;"></div><svg style="position:absolute;left:930px;top:901px" width="14" height="14" viewBox="0 0 14 14"><path d="M7 0.5V13.5M0.5 7H13.5" stroke="#e8e8e8" stroke-width="1.4"/></svg><div style="position:absolute;left:1154px;top:902px;width:4px;height:3px;background:#f0f0f0;"></div><div style="position:absolute;left:1154px;top:907px;width:4px;height:3px;background:#f0f0f0;"></div><div style="position:absolute;left:1154px;top:912px;width:4px;height:3px;background:#f0f0f0;"></div><div style="position:absolute;left:1176px;top:897px;width:721px;height:21px;background:#161616;border-radius:11px"></div><svg style="position:absolute;left:1182px;top:902px" width="9" height="11" viewBox="0 0 9 11"><path d="M9 0.3V10.7L0.5 5.5Z" fill="#9a9a9a" stroke="#9a9a9a" stroke-width="0.6" stroke-linejoin="round"/></svg><div style="position:absolute;left:1197px;top:902px;width:652px;height:11px;background:#9c9c9c;border-radius:6px"></div><svg style="position:absolute;left:1882px;top:902px" width="9" height="11" viewBox="0 0 9 11"><path d="M0 0.3V10.7L8.5 5.5Z" fill="#9a9a9a" stroke="#9a9a9a" stroke-width="0.6" stroke-linejoin="round"/></svg><div style="position:absolute;left:1897px;top:205px;width:20px;height:686px;background:#161616;border-radius:10px"></div><svg style="position:absolute;left:1902px;top:211px" width="11" height="9" viewBox="0 0 11 9"><path d="M0.3 8.5H10.7L5.5 0.3Z" fill="#9a9a9a" stroke="#9a9a9a" stroke-width="0.6" stroke-linejoin="round"/></svg><div style="position:absolute;left:1902px;top:226px;width:11px;height:642px;background:#9c9c9c;border-radius:6px"></div><svg style="position:absolute;left:1902px;top:876px" width="11" height="9" viewBox="0 0 11 9"><path d="M0.3 0.5H10.7L5.5 8.7Z" fill="#9a9a9a" stroke="#9a9a9a" stroke-width="0.6" stroke-linejoin="round"/></svg><div class="t" style="left:18.90px;top:138.88px;font-size:13.67px;color:#e6e6e6;letter-spacing:-0.342px;">Área de Transfer...</div><div class="t" style="left:623.20px;top:138.88px;font-size:13.67px;color:#e6e6e6;letter-spacing:-0.469px;">Alinhamento</div><div class="t" style="left:962.40px;top:138.88px;font-size:13.67px;color:#e6e6e6;letter-spacing:-0.324px;">Número</div><div class="t" style="left:1226.20px;top:138.88px;font-size:13.67px;color:#e6e6e6;letter-spacing:-0.61px;">Estilos</div><div class="t" style="left:1440.60px;top:138.88px;font-size:13.67px;color:#e6e6e6;letter-spacing:-0.915px;">Células</div><div class="t" style="left:1625.40px;top:138.88px;font-size:13.67px;color:#e6e6e6;letter-spacing:-0.8px;">Edição</div><div class="t" style="left:1779.00px;top:138.88px;font-size:13.67px;color:#e6e6e6;letter-spacing:-0.499px;">Suplementos</div><div class="t" style="left:39.30px;top:87.64px;font-size:15.37px;color:#f0f0f0;letter-spacing:-0.532px;">Colar</div><svg style="position:absolute;left:53.5px;top:112.5px" width="7.0" height="4.0" viewBox="0 0 7.0 4.0"><polyline points="0,0 3.5,4.0 7.0,0" fill="none" stroke="#f0f0f0" stroke-width="1.3" stroke-linecap="round" stroke-linejoin="round"/></svg><div style="position:absolute;left:161px;top:47px;width:144px;height:30px;background:transparent;background:transparent;border:1px solid #6b6b6b;border-radius:5px;box-sizing:border-box"></div><div class="t" style="left:164.30px;top:55.19px;font-size:15.9px;color:#f0f0f0;letter-spacing:-0.355px;">Calibri Light</div><svg style="position:absolute;left:294px;top:60.3px" width="7" height="4.200000000000003" viewBox="0 0 7 4.200000000000003"><polyline points="0,0 3.5,4.200000000000003 7,0" fill="none" stroke="#f0f0f0" stroke-width="1.3" stroke-linecap="round" stroke-linejoin="round"/></svg><div style="position:absolute;left:307px;top:47px;width:62px;height:30px;background:transparent;background:transparent;border:1px solid #6b6b6b;border-radius:5px;box-sizing:border-box"></div><div class="t" style="left:311.30px;top:55.19px;font-size:15.9px;color:#f0f0f0;">11</div><svg style="position:absolute;left:358px;top:60.3px" width="7" height="4.200000000000003" viewBox="0 0 7 4.200000000000003"><polyline points="0,0 3.5,4.200000000000003 7,0" fill="none" stroke="#f0f0f0" stroke-width="1.3" stroke-linecap="round" stroke-linejoin="round"/></svg><div class="t" style="left:659.40px;top:54.98px;font-size:15.9px;color:#f0f0f0;letter-spacing:-0.405px;">Quebrar Texto Automaticamente</div><div class="t" style="left:659.40px;top:94.78px;font-size:15.9px;color:#f0f0f0;letter-spacing:-0.631px;">Mesclar e Centralizar</div><svg style="position:absolute;left:813px;top:100.5px" width="7" height="4.299999999999997" viewBox="0 0 7 4.299999999999997"><polyline points="0,0 3.5,4.299999999999997 7,0" fill="none" stroke="#f0f0f0" stroke-width="1.3" stroke-linecap="round" stroke-linejoin="round"/></svg><div style="position:absolute;left:907px;top:47px;width:180px;height:30px;background:transparent;background:transparent;border:1px solid #6b6b6b;border-radius:5px;box-sizing:border-box"></div><div class="t" style="left:910.50px;top:55.44px;font-size:15.37px;color:#f0f0f0;letter-spacing:-0.971px;">Geral</div><svg style="position:absolute;left:1076px;top:60.3px" width="7" height="4.200000000000003" viewBox="0 0 7 4.200000000000003"><polyline points="0,0 3.5,4.200000000000003 7,0" fill="none" stroke="#f0f0f0" stroke-width="1.3" stroke-linecap="round" stroke-linejoin="round"/></svg><div class="t" style="left:1116.50px;top:86.76px;font-size:15.69px;color:#f0f0f0;letter-spacing:-0.59px;">Formatação</div><div class="t" style="left:1109.00px;top:106.66px;font-size:15.69px;color:#f0f0f0;letter-spacing:-0.379px;">Condicional</div><svg style="position:absolute;left:1193px;top:110.5px" width="7" height="4.0" viewBox="0 0 7 4.0"><polyline points="0,0 3.5,4.0 7,0" fill="none" stroke="#f0f0f0" stroke-width="1.3" stroke-linecap="round" stroke-linejoin="round"/></svg><div class="t" style="left:1209.20px;top:86.76px;font-size:15.69px;color:#f0f0f0;letter-spacing:-0.397px;">Formatar como</div><div class="t" style="left:1232.50px;top:106.66px;font-size:15.69px;color:#f0f0f0;letter-spacing:-0.807px;">Tabela</div><svg style="position:absolute;left:1280px;top:110.5px" width="7" height="4.0" viewBox="0 0 7 4.0"><polyline points="0,0 3.5,4.0 7,0" fill="none" stroke="#f0f0f0" stroke-width="1.3" stroke-linecap="round" stroke-linejoin="round"/></svg><div class="t" style="left:1318.40px;top:86.76px;font-size:15.69px;color:#f0f0f0;letter-spacing:-0.614px;">Estilos de</div><div class="t" style="left:1322.00px;top:106.66px;font-size:15.69px;color:#f0f0f0;letter-spacing:-0.876px;">Célula</div><svg style="position:absolute;left:1368px;top:110.5px" width="7" height="4.0" viewBox="0 0 7 4.0"><polyline points="0,0 3.5,4.0 7,0" fill="none" stroke="#f0f0f0" stroke-width="1.3" stroke-linecap="round" stroke-linejoin="round"/></svg><div class="t" style="left:1434.50px;top:46.06px;font-size:15.69px;color:#f0f0f0;letter-spacing:-0.699px;">Inserir</div><svg style="position:absolute;left:1490px;top:50.7px" width="7" height="4.299999999999997" viewBox="0 0 7 4.299999999999997"><polyline points="0,0 3.5,4.299999999999997 7,0" fill="none" stroke="#f0f0f0" stroke-width="1.3" stroke-linecap="round" stroke-linejoin="round"/></svg><div class="t" style="left:1434.50px;top:77.76px;font-size:15.69px;color:#f0f0f0;letter-spacing:-0.763px;">Excluir</div><svg style="position:absolute;left:1493px;top:82.7px" width="7" height="4.299999999999997" viewBox="0 0 7 4.299999999999997"><polyline points="0,0 3.5,4.299999999999997 7,0" fill="none" stroke="#f0f0f0" stroke-width="1.3" stroke-linecap="round" stroke-linejoin="round"/></svg><div class="t" style="left:1434.50px;top:109.46px;font-size:15.69px;color:#f0f0f0;letter-spacing:-0.606px;">Formatar</div><svg style="position:absolute;left:1499px;top:113.3px" width="7" height="4.200000000000003" viewBox="0 0 7 4.200000000000003"><polyline points="0,0 3.5,4.200000000000003 7,0" fill="none" stroke="#f0f0f0" stroke-width="1.3" stroke-linecap="round" stroke-linejoin="round"/></svg><svg style="position:absolute;left:1574px;top:50.3px" width="7" height="4.200000000000003" viewBox="0 0 7 4.200000000000003"><polyline points="0,0 3.5,4.200000000000003 7,0" fill="none" stroke="#f0f0f0" stroke-width="1.3" stroke-linecap="round" stroke-linejoin="round"/></svg><svg style="position:absolute;left:1572px;top:82.3px" width="7" height="4.299999999999997" viewBox="0 0 7 4.299999999999997"><polyline points="0,0 3.5,4.299999999999997 7,0" fill="none" stroke="#f0f0f0" stroke-width="1.3" stroke-linecap="round" stroke-linejoin="round"/></svg><svg style="position:absolute;left:1572px;top:114.3px" width="7" height="4.0" viewBox="0 0 7 4.0"><polyline points="0,0 3.5,4.0 7,0" fill="none" stroke="#f0f0f0" stroke-width="1.3" stroke-linecap="round" stroke-linejoin="round"/></svg><div class="t" style="left:1593.10px;top:86.56px;font-size:15.69px;color:#f0f0f0;letter-spacing:-0.656px;">Classificar</div><div class="t" style="left:1594.00px;top:106.76px;font-size:15.69px;color:#f0f0f0;letter-spacing:-0.447px;">e Filtrar</div><svg style="position:absolute;left:1650px;top:110.5px" width="6" height="4.0" viewBox="0 0 6 4.0"><polyline points="0,0 3.0,4.0 6,0" fill="none" stroke="#f0f0f0" stroke-width="1.3" stroke-linecap="round" stroke-linejoin="round"/></svg><div class="t" style="left:1672.20px;top:86.56px;font-size:15.69px;color:#f0f0f0;letter-spacing:-0.538px;">Localizar e</div><div class="t" style="left:1666.30px;top:106.76px;font-size:15.69px;color:#f0f0f0;letter-spacing:-0.637px;">Selecionar</div><svg style="position:absolute;left:1740px;top:110.5px" width="7" height="4.0" viewBox="0 0 7 4.0"><polyline points="0,0 3.5,4.0 7,0" fill="none" stroke="#f0f0f0" stroke-width="1.3" stroke-linecap="round" stroke-linejoin="round"/></svg><div class="t" style="left:1774.70px;top:86.66px;font-size:15.69px;color:#f0f0f0;letter-spacing:-0.638px;">Suplementos</div><svg style="position:absolute;left:1886px;top:137px" width="12" height="6" viewBox="0 0 12 6"><polyline points="0,0 6.0,6 12,0" fill="none" stroke="#f0f0f0" stroke-width="1.3" stroke-linecap="round" stroke-linejoin="round"/></svg><svg style="position:absolute;left:38px;top:38px" width="44" height="46" viewBox="0 0 44 46">
<path d="M7.2 40.7 V12.2 H29.7 V19" fill="none" stroke="#eea228" stroke-width="4"/>
<path d="M7.2 38.7 H22" fill="none" stroke="#eea228" stroke-width="4"/>
<path d="M5.4 41 V10.5 H31.5 V19" fill="none" stroke="#f4cf7c" stroke-width="0.9"/>
<path d="M11.2 14.6 V10.2 H14.3 A4.1 4.1 0 0 1 22.5 10.2 H25.8 V14.6 Z" fill="#292929" stroke="#a2a2a2" stroke-width="2"/>
<rect x="22.1" y="21.1" width="16.1" height="20.8" fill="#292929" stroke="#d2d2d2" stroke-width="2.1"/>
</svg><svg style="position:absolute;left:86px;top:38px" width="24" height="26" viewBox="0 0 24 26">
<line x1="9.7" y1="3.5" x2="17" y2="19.3" stroke="#cfcfcf" stroke-width="1.1"/>
<line x1="18.2" y1="3.5" x2="10.9" y2="19.3" stroke="#cfcfcf" stroke-width="1.1"/>
<circle cx="10.2" cy="21.4" r="2.2" fill="none" stroke="#3b9de3" stroke-width="1.5"/>
<circle cx="17.7" cy="21.4" r="2.2" fill="none" stroke="#3b9de3" stroke-width="1.5"/>
</svg><svg style="position:absolute;left:86px;top:70px" width="26" height="26" viewBox="0 0 26 26">
<path d="M11.5 20.8 H4.6 V4.8 H12.2 L14.3 7" fill="none" stroke="#cfcfcf" stroke-width="1.5"/>
<path d="M12.2 8.2 H19.5 L23.3 12 V23.4 H12.2 Z" fill="#292929" stroke="#cfcfcf" stroke-width="1.5"/>
<path d="M19.2 8.5 V12.3 H23" fill="none" stroke="#cfcfcf" stroke-width="1.2"/>
<line x1="15" y1="16.5" x2="20.5" y2="16.5" stroke="#cfcfcf" stroke-width="1.2"/>
<line x1="15" y1="19.5" x2="20.5" y2="19.5" stroke="#cfcfcf" stroke-width="1.2"/>
</svg><svg style="position:absolute;left:120px;top:82.7px" width="7" height="3.799999999999997" viewBox="0 0 7 3.799999999999997"><polyline points="0,0 3.5,3.799999999999997 7,0" fill="none" stroke="#f0f0f0" stroke-width="1.4" stroke-linecap="round" stroke-linejoin="round"/></svg><svg style="position:absolute;left:86px;top:102px" width="26" height="26" viewBox="0 0 26 26">
<path d="M12.3 8.4 L14.6 6.2 L17.2 8.8 L21.3 4.6 L24 7.3 L19.9 11.5 L22 13.6 L19.6 15.9 Z" fill="#292929" stroke="#d4d4d4" stroke-width="1.4" stroke-linejoin="round"/>
<path d="M12.3 8.4 L4.3 12.6 L12.6 22 L19.6 15.9" fill="none" stroke="#f3cf78" stroke-width="1.3" stroke-linejoin="round"/>
<path d="M9.2 15.6 L16.8 18 L12.7 21 Z" fill="#e8951c"/>
</svg><div class="t" style="left:168.70px;top:91.84px;font-size:17.6px;color:#d6d6d6;font-weight:bold;letter-spacing:-0.11px;">N</div><div class="t" style="left:202.80px;top:91.50px;font-size:18px;color:#d0d0d0;font-family:'Liberation Serif';font-style:italic;">I</div><div class="t" style="left:234.60px;top:92.57px;font-size:16.5px;color:#d0d0d0;">S</div><div style="position:absolute;left:235px;top:108px;width:10px;height:2px;background:#d0d0d0;"></div><svg style="position:absolute;left:260px;top:100.6px" width="7" height="4.1000000000000085" viewBox="0 0 7 4.1000000000000085"><polyline points="0,0 3.5,4.1000000000000085 7,0" fill="none" stroke="#f0f0f0" stroke-width="1.4" stroke-linecap="round" stroke-linejoin="round"/></svg><div style="position:absolute;left:276px;top:87px;width:1px;height:30px;background:#555555;"></div><svg style="position:absolute;left:283px;top:91px" width="22" height="22" viewBox="0 0 22 22"><rect x="1" y="1" width="1.4" height="1.4" fill="#d6d6d6"/><rect x="1" y="9.8" width="1.4" height="1.4" fill="#d6d6d6"/><rect x="3.8" y="1" width="1.4" height="1.4" fill="#d6d6d6"/><rect x="3.8" y="9.8" width="1.4" height="1.4" fill="#d6d6d6"/><rect x="6.6" y="1" width="1.4" height="1.4" fill="#d6d6d6"/><rect x="6.6" y="9.8" width="1.4" height="1.4" fill="#d6d6d6"/><rect x="9.4" y="1" width="1.4" height="1.4" fill="#d6d6d6"/><rect x="9.4" y="9.8" width="1.4" height="1.4" fill="#d6d6d6"/><rect x="12.2" y="1" width="1.4" height="1.4" fill="#d6d6d6"/><rect x="12.2" y="9.8" width="1.4" height="1.4" fill="#d6d6d6"/><rect x="15" y="1" width="1.4" height="1.4" fill="#d6d6d6"/><rect x="15" y="9.8" width="1.4" height="1.4" fill="#d6d6d6"/><rect x="17.8" y="1" width="1.4" height="1.4" fill="#d6d6d6"/><rect x="17.8" y="9.8" width="1.4" height="1.4" fill="#d6d6d6"/><rect x="1" y="3.8" width="1.4" height="1.4" fill="#d6d6d6"/><rect x="1" y="6.6" width="1.4" height="1.4" fill="#d6d6d6"/><rect x="1" y="12.6" width="1.4" height="1.4" fill="#d6d6d6"/><rect x="1" y="15.4" width="1.4" height="1.4" fill="#d6d6d6"/><rect x="9.8" y="3.8" width="1.4" height="1.4" fill="#d6d6d6"/><rect x="9.8" y="6.6" width="1.4" height="1.4" fill="#d6d6d6"/><rect x="9.8" y="12.6" width="1.4" height="1.4" fill="#d6d6d6"/><rect x="9.8" y="15.4" width="1.4" height="1.4" fill="#d6d6d6"/><rect x="18.6" y="3.8" width="1.4" height="1.4" fill="#d6d6d6"/><rect x="18.6" y="6.6" width="1.4" height="1.4" fill="#d6d6d6"/><rect x="18.6" y="12.6" width="1.4" height="1.4" fill="#d6d6d6"/><rect x="18.6" y="15.4" width="1.4" height="1.4" fill="#d6d6d6"/><rect x="18.6" y="9.8" width="1.4" height="1.4" fill="#d6d6d6"/><rect x="18.6" y="1" width="1.4" height="1.4" fill="#d6d6d6"/><rect x="0.8" y="18.2" width="19.3" height="2.2" fill="#dadada"/></svg><svg style="position:absolute;left:314px;top:100.3px" width="7" height="4.299999999999997" viewBox="0 0 7 4.299999999999997"><polyline points="0,0 3.5,4.299999999999997 7,0" fill="none" stroke="#f0f0f0" stroke-width="1.4" stroke-linecap="round" stroke-linejoin="round"/></svg><div style="position:absolute;left:330px;top:87px;width:1px;height:30px;background:#555555;"></div><svg style="position:absolute;left:337px;top:91px" width="23" height="24" viewBox="0 0 23 24">
<path d="M4.7 8.4 L10.3 2.8 L17.2 9.7 L11.6 15.3 Z" fill="none" stroke="#d2d2d2" stroke-width="1.4" stroke-linejoin="round"/>
<path d="M10.3 2.8 V2.2 A1.5 1.5 0 0 1 13.3 2.2 V7.8" fill="none" stroke="#d2d2d2" stroke-width="1.3"/>
<path d="M16.3 7.1 C18.5 7.8 19 10.3 19 14.5 L17.5 14.5 C17.5 11.8 17 9.8 15.5 8.8 Z" fill="#6db3ec"/>
<rect x="1" y="16" width="20.2" height="5" fill="#ffff00"/>
</svg><svg style="position:absolute;left:368px;top:100.3px" width="7" height="4.299999999999997" viewBox="0 0 7 4.299999999999997"><polyline points="0,0 3.5,4.299999999999997 7,0" fill="none" stroke="#f0f0f0" stroke-width="1.4" stroke-linecap="round" stroke-linejoin="round"/></svg><div class="t" style="left:392.30px;top:90.60px;font-size:18px;color:#d2d2d2;letter-spacing:0.994px;">A</div><div style="position:absolute;left:389px;top:107px;width:20px;height:5px;background:#ff0000;"></div><svg style="position:absolute;left:419px;top:100.3px" width="7" height="4.299999999999997" viewBox="0 0 7 4.299999999999997"><polyline points="0,0 3.5,4.299999999999997 7,0" fill="none" stroke="#f0f0f0" stroke-width="1.4" stroke-linecap="round" stroke-linejoin="round"/></svg><div class="t" style="left:376.30px;top:49.80px;font-size:22px;color:#d2d2d2;">A</div><svg style="position:absolute;left:389px;top:52px" width="8" height="5" viewBox="0 0 8 5"><polyline points="0.8,4.2 3.8,1 6.8,4.2" fill="none" stroke="#3b9de3" stroke-width="1.4"/></svg><div class="t" style="left:410.60px;top:52.77px;font-size:18.5px;color:#d2d2d2;">A</div><svg style="position:absolute;left:421px;top:52px" width="8" height="5" viewBox="0 0 8 5"><polyline points="0.8,1 3.8,4.2 6.8,1" fill="none" stroke="#3b9de3" stroke-width="1.4"/></svg><div class="t" style="left:270.90px;top:138.88px;font-size:13.67px;color:#e6e6e6;letter-spacing:-1.089px;">Fonte</div><svg style="position:absolute;left:136px;top:140px" width="11" height="11" viewBox="0 0 11 11"><path d="M0.7 9.5 V0.7 H9.5" fill="none" stroke="#cfcfcf" stroke-width="1.2"/><path d="M3 3 L9.7 9.7 M5 9.7 H9.7 V5" fill="none" stroke="#cfcfcf" stroke-width="1.2"/></svg><svg style="position:absolute;left:428px;top:140px" width="11" height="11" viewBox="0 0 11 11"><path d="M0.7 9.5 V0.7 H9.5" fill="none" stroke="#cfcfcf" stroke-width="1.2"/><path d="M3 3 L9.7 9.7 M5 9.7 H9.7 V5" fill="none" stroke="#cfcfcf" stroke-width="1.2"/></svg><svg style="position:absolute;left:882px;top:140px" width="11" height="11" viewBox="0 0 11 11"><path d="M0.7 9.5 V0.7 H9.5" fill="none" stroke="#cfcfcf" stroke-width="1.2"/><path d="M3 3 L9.7 9.7 M5 9.7 H9.7 V5" fill="none" stroke="#cfcfcf" stroke-width="1.2"/></svg><svg style="position:absolute;left:1082px;top:140px" width="11" height="11" viewBox="0 0 11 11"><path d="M0.7 9.5 V0.7 H9.5" fill="none" stroke="#cfcfcf" stroke-width="1.2"/><path d="M3 3 L9.7 9.7 M5 9.7 H9.7 V5" fill="none" stroke="#cfcfcf" stroke-width="1.2"/></svg><div style="position:absolute;left:459px;top:51.65px;width:18.00px;height:1.7px;background:#d2d2d2"></div><div style="position:absolute;left:461.8px;top:56.85px;width:12.60px;height:1.7px;background:#d2d2d2"></div><div style="position:absolute;left:459px;top:61.75px;width:18.00px;height:1.7px;background:#d2d2d2"></div><div style="position:absolute;left:491px;top:55.35px;width:18.00px;height:1.7px;background:#d2d2d2"></div><div style="position:absolute;left:493.7px;top:60.45px;width:12.60px;height:1.7px;background:#d2d2d2"></div><div style="position:absolute;left:491px;top:65.45px;width:18.00px;height:1.7px;background:#d2d2d2"></div><div style="position:absolute;left:517px;top:47px;width:30px;height:30px;background:#3a3a3a;border:1px solid #8c8c8c;border-radius:5px;box-sizing:border-box"></div><div style="position:absolute;left:523px;top:60.45px;width:18.00px;height:1.7px;background:#d2d2d2"></div><div style="position:absolute;left:525.8px;top:65.45px;width:12.40px;height:1.7px;background:#d2d2d2"></div><div style="position:absolute;left:523px;top:70.25px;width:18.00px;height:1.7px;background:#d2d2d2"></div><div style="position:absolute;left:549px;top:47px;width:1px;height:30px;background:#555555;"></div><div style="position:absolute;left:549px;top:87px;width:1px;height:30px;background:#555555;"></div><div style="position:absolute;left:621px;top:46px;width:1px;height:78px;background:#555555;"></div><svg style="position:absolute;left:555px;top:50px" width="24" height="23" viewBox="0 0 24 23">
<text x="0" y="0" transform="translate(5.2,17) rotate(-45)" font-family="Liberation Sans" font-size="12.5" fill="#d2d2d2">ab</text>
<line x1="9" y1="20.3" x2="22" y2="7.3" stroke="#3b9de3" stroke-width="1.5"/>
<polyline points="16.3,6.6 22.6,6.6 22.6,12.9" fill="none" stroke="#3b9de3" stroke-width="1.5"/>
</svg><svg style="position:absolute;left:585px;top:60.4px" width="7" height="4.300000000000004" viewBox="0 0 7 4.300000000000004"><polyline points="0,0 3.5,4.300000000000004 7,0" fill="none" stroke="#f0f0f0" stroke-width="1.4" stroke-linecap="round" stroke-linejoin="round"/></svg><div style="position:absolute;left:459px;top:93.05px;width:18.00px;height:1.7px;background:#d2d2d2"></div><div style="position:absolute;left:459px;top:97.95px;width:13.00px;height:1.7px;background:#d2d2d2"></div><div style="position:absolute;left:459px;top:103.05px;width:18.00px;height:1.7px;background:#d2d2d2"></div><div style="position:absolute;left:459px;top:108.05px;width:13.00px;height:1.7px;background:#d2d2d2"></div><div style="position:absolute;left:491px;top:93.05px;width:18.00px;height:1.7px;background:#d2d2d2"></div><div style="position:absolute;left:493.7px;top:97.95px;width:12.60px;height:1.7px;background:#d2d2d2"></div><div style="position:absolute;left:491px;top:103.05px;width:18.00px;height:1.7px;background:#d2d2d2"></div><div style="position:absolute;left:493.7px;top:108.05px;width:12.60px;height:1.7px;background:#d2d2d2"></div><div style="position:absolute;left:523px;top:93.05px;width:18.00px;height:1.7px;background:#d2d2d2"></div><div style="position:absolute;left:528px;top:97.95px;width:13.00px;height:1.7px;background:#d2d2d2"></div><div style="position:absolute;left:523px;top:103.05px;width:18.00px;height:1.7px;background:#d2d2d2"></div><div style="position:absolute;left:528px;top:108.05px;width:13.00px;height:1.7px;background:#d2d2d2"></div><div style="position:absolute;left:558px;top:93.05px;width:18.00px;height:1.7px;background:#d2d2d2"></div><div style="position:absolute;left:568px;top:97.95px;width:8.00px;height:1.7px;background:#d2d2d2"></div><div style="position:absolute;left:568px;top:103.05px;width:8.00px;height:1.7px;background:#d2d2d2"></div><div style="position:absolute;left:558px;top:108.05px;width:18.00px;height:1.7px;background:#d2d2d2"></div><div style="position:absolute;left:590px;top:93.05px;width:18.00px;height:1.7px;background:#d2d2d2"></div><div style="position:absolute;left:600px;top:97.95px;width:8.00px;height:1.7px;background:#d2d2d2"></div><div style="position:absolute;left:600px;top:103.05px;width:8.00px;height:1.7px;background:#d2d2d2"></div><div style="position:absolute;left:590px;top:108.05px;width:18.00px;height:1.7px;background:#d2d2d2"></div><svg style="position:absolute;left:557px;top:96px" width="11" height="11" viewBox="0 0 11 11"><line x1="1" y1="5.3" x2="9.5" y2="5.3" stroke="#3b9de3" stroke-width="1.6"/><polyline points="4.8,1.5 1,5.3 4.8,9.1" fill="none" stroke="#3b9de3" stroke-width="1.6"/></svg><svg style="position:absolute;left:589px;top:96px" width="11" height="11" viewBox="0 0 11 11"><line x1="1" y1="5.3" x2="9.5" y2="5.3" stroke="#3b9de3" stroke-width="1.6"/><polyline points="5.7,1.5 9.5,5.3 5.7,9.1" fill="none" stroke="#3b9de3" stroke-width="1.6"/></svg><svg style="position:absolute;left:636px;top:51px" width="20" height="22" viewBox="0 0 20 22">
<text x="0.3" y="9.6" font-family="Liberation Sans" font-size="12.3" fill="#bdbdbd" letter-spacing="-0.3">ab</text>
<text x="0.3" y="20" font-family="Liberation Sans" font-size="12.3" fill="#bdbdbd">c</text>
<path d="M10.5 17.6 H15 A3.2 3.2 0 0 0 15 11.2 H13.5" fill="none" stroke="#3b9de3" stroke-width="1.5"/>
<polyline points="12.8,14.6 9.8,17.6 12.8,20.6" fill="none" stroke="#3b9de3" stroke-width="1.5"/>
</svg><svg style="position:absolute;left:633px;top:91px" width="21" height="21" viewBox="0 0 21 21">
<rect x="1" y="1" width="19" height="19" fill="none" stroke="#bdbdbd" stroke-width="1.6"/>
<line x1="10.5" y1="1" x2="10.5" y2="5" stroke="#bdbdbd" stroke-width="1.4"/>
<line x1="10.5" y1="16" x2="10.5" y2="20" stroke="#bdbdbd" stroke-width="1.4"/>
<rect x="1.2" y="5.5" width="18.6" height="10" fill="#292929" stroke="#3b9de3" stroke-width="1.6"/>
<line x1="4.5" y1="10.5" x2="16.5" y2="10.5" stroke="#3b9de3" stroke-width="1.4"/>
<polyline points="7,8 4.5,10.5 7,13" fill="none" stroke="#3b9de3" stroke-width="1.4"/>
<polyline points="14,8 16.5,10.5 14,13" fill="none" stroke="#3b9de3" stroke-width="1.4"/>
</svg><svg style="position:absolute;left:911px;top:94px" width="23" height="19" viewBox="0 0 23 19">
<rect x="1.5" y="1.8" width="19.5" height="12.5" fill="none" stroke="#cfcfcf" stroke-width="1.4"/>
<text x="3" y="12.3" font-family="Liberation Sans" font-weight="bold" font-size="11.5" fill="#cfcfcf" letter-spacing="-1.8">CC</text>
<rect x="12" y="8.3" width="9.3" height="9.7" rx="3" fill="#292929" stroke="#f1cf7d" stroke-width="1.4"/>
<line x1="11.5" y1="11.3" x2="21.5" y2="11.3" stroke="#f1cf7d" stroke-width="1.2"/>
<line x1="11.5" y1="14.5" x2="21.5" y2="14.5" stroke="#f1cf7d" stroke-width="1.2"/>
<ellipse cx="16.5" cy="8.6" rx="4.3" ry="1.3" fill="#e9a43a"/>
</svg><svg style="position:absolute;left:942px;top:100.5px" width="7" height="4.299999999999997" viewBox="0 0 7 4.299999999999997"><polyline points="0,0 3.5,4.299999999999997 7,0" fill="none" stroke="#f0f0f0" stroke-width="1.4" stroke-linecap="round" stroke-linejoin="round"/></svg><svg style="position:absolute;left:962px;top:92px" width="22" height="21" viewBox="0 0 22 21"><ellipse cx="6" cy="5.6" rx="3.3" ry="3.6" fill="none" stroke="#cacaca" stroke-width="1.6"/><ellipse cx="16.2" cy="15.2" rx="3.3" ry="3.6" fill="none" stroke="#cacaca" stroke-width="1.6"/><line x1="18.5" y1="1.3" x2="4" y2="19.3" stroke="#cacaca" stroke-width="1.6"/></svg><div class="t" style="left:994.80px;top:94.07px;font-size:13.8px;color:#c8c8c8;letter-spacing:-1.662px;">000</div><div style="position:absolute;left:1022px;top:87px;width:1px;height:30px;background:#555555;"></div><div class="t" style="left:1040.00px;top:89.50px;font-size:13.3px;color:#d2d2d2;letter-spacing:-2.592px;">,0</div><div class="t" style="left:1033.60px;top:99.90px;font-size:13.3px;color:#d2d2d2;letter-spacing:-1.744px;">,00</div><svg style="position:absolute;left:1029px;top:92px" width="13" height="11" viewBox="0 0 13 11"><line x1="1.3" y1="5.4" x2="12" y2="5.4" stroke="#3b9de3" stroke-width="1.5"/><polyline points="5.3,1.4 1.3,5.4 5.3,9.4" fill="none" stroke="#3b9de3" stroke-width="1.5"/></svg><div class="t" style="left:1065.60px;top:89.50px;font-size:13.3px;color:#d2d2d2;letter-spacing:-1.744px;">,00</div><div class="t" style="left:1072.60px;top:99.90px;font-size:13.3px;color:#d2d2d2;letter-spacing:-2.592px;">,0</div><svg style="position:absolute;left:1061px;top:100.5px" width="13" height="11" viewBox="0 0 13 11"><line x1="0.5" y1="5.4" x2="11.3" y2="5.4" stroke="#3b9de3" stroke-width="1.5"/><polyline points="7.3,1.4 11.3,5.4 7.3,9.4" fill="none" stroke="#3b9de3" stroke-width="1.5"/></svg><svg style="position:absolute;left:1137px;top:46px" width="38" height="30" viewBox="0 0 38 30">
<g fill="none" stroke="#c8c8c8" stroke-width="1.8">
<rect x="2" y="1.8" width="35" height="27.2"/>
<line x1="7.5" y1="1.8" x2="7.5" y2="29"/><line x1="29.5" y1="1.8" x2="29.5" y2="29"/>
<line x1="2" y1="10.6" x2="37" y2="10.6"/><line x1="2" y1="19.2" x2="37" y2="19.2"/>
</g>
<rect x="8.5" y="1.8" width="15" height="9" fill="#d42216" stroke="#f08585" stroke-width="1"/>
<rect x="8.5" y="11" width="10" height="8" fill="#0063b8" stroke="#72bbf2" stroke-width="1"/>
<rect x="8.5" y="19.2" width="17.5" height="9.8" fill="#d42216" stroke="#f08585" stroke-width="1"/>
</svg><svg style="position:absolute;left:1241px;top:46px" width="42" height="36" viewBox="0 0 42 36">
<rect x="13" y="10.4" width="24" height="18.5" fill="#0067b8"/>
<g fill="none" stroke="#c8c8c8" stroke-width="1.8">
<path d="M12.9 28.9 H1.2 V1.1 H37 V10.4"/>
<line x1="12.9" y1="1.1" x2="12.9" y2="28.9"/><line x1="24.9" y1="1.1" x2="24.9" y2="10.4"/>
<line x1="1.2" y1="10.4" x2="13" y2="10.4"/><line x1="1.2" y1="19.5" x2="13" y2="19.5"/>
</g>
<g fill="none" stroke="#6fb9f0" stroke-width="1.2"><path d="M13 28.9 V10.4 H37 V28.9 H28"/><line x1="24.9" y1="10.4" x2="24.9" y2="26"/><line x1="13" y1="19.5" x2="30" y2="19.5"/></g>
<path d="M38.6 10.3 C39.8 9.6 40.6 10.4 40 11.6 L22.5 30 L19.7 27.3 Z" fill="#292929" stroke="#d2d2d2" stroke-width="1.3" stroke-linejoin="round"/>
<path d="M19.5 27.2 C16 25.5 13 27 12 30 C11 32.5 9.5 33.2 7 33.2 C10.5 35.5 16.5 35.2 19.5 32.5 C21.2 31 21.5 29.3 20.7 28.4 Z" fill="#0067b8" stroke="#6fb9f0" stroke-width="1.3" stroke-linejoin="round"/>
</svg><svg style="position:absolute;left:1331px;top:46px" width="42" height="36" viewBox="0 0 42 36">
<rect x="8.3" y="7.5" width="21.2" height="14.2" fill="#0067b8" stroke="#6fb9f0" stroke-width="1.2"/>
<g fill="none" stroke="#c8c8c8" stroke-width="1.8">
<path d="M14 28.9 H1.4 V1.1 H36.8 V7.5"/>
<line x1="8.3" y1="1.1" x2="8.3" y2="28.9"/><line x1="29.5" y1="1.1" x2="29.5" y2="7.5"/>
<line x1="1.4" y1="7.5" x2="8.3" y2="7.5"/><line x1="29.5" y1="7.5" x2="36.8" y2="7.5"/>
<line x1="1.4" y1="21.7" x2="8.3" y2="21.7"/>
</g>
<path d="M38.6 10.3 C39.8 9.6 40.6 10.4 40 11.6 L22.5 30 L19.7 27.3 Z" fill="#292929" stroke="#d2d2d2" stroke-width="1.3" stroke-linejoin="round"/>
<path d="M19.5 27.2 C16 25.5 13 27 12 30 C11 32.5 9.5 33.2 7 33.2 C10.5 35.5 16.5 35.2 19.5 32.5 C21.2 31 21.5 29.3 20.7 28.4 Z" fill="#0067b8" stroke="#6fb9f0" stroke-width="1.3" stroke-linejoin="round"/>
</svg><svg style="position:absolute;left:1408px;top:42px" width="22" height="20" viewBox="0 0 22 20"><g fill="none" stroke="#c8c8c8" stroke-width="1.6"><rect x="1.6" y="1.8" width="18.8" height="16.4"/>
<line x1="7.866666666666667" y1="1.8" x2="7.866666666666667" y2="18.2"/><line x1="14.133333333333333" y1="1.8" x2="14.133333333333333" y2="18.2"/>
<line x1="1.6" y1="7.266666666666666" x2="20.400000000000002" y2="7.266666666666666"/><line x1="1.6" y1="12.733333333333333" x2="20.400000000000002" y2="12.733333333333333"/></g>
<rect x="8" y="6.3" width="13.2" height="7.5" fill="#0067b8" stroke="#6fb9f0" stroke-width="1.2"/>
<line x1="11.5" y1="6.3" x2="11.5" y2="13.8" stroke="#6fb9f0" stroke-width="1"/>
<line x1="1.5" y1="10" x2="10" y2="10" stroke="#3b9de3" stroke-width="1.6"/><polyline points="5,6.3 1.3,10 5,13.7" fill="none" stroke="#3b9de3" stroke-width="1.6"/>
</svg><svg style="position:absolute;left:1408px;top:74px" width="22" height="20" viewBox="0 0 22 20"><g fill="none" stroke="#c8c8c8" stroke-width="1.6"><rect x="1.6" y="1.8" width="18.8" height="16.4"/>
<line x1="7.866666666666667" y1="1.8" x2="7.866666666666667" y2="18.2"/><line x1="14.133333333333333" y1="1.8" x2="14.133333333333333" y2="18.2"/>
<line x1="1.6" y1="7.266666666666666" x2="20.400000000000002" y2="7.266666666666666"/><line x1="1.6" y1="12.733333333333333" x2="20.400000000000002" y2="12.733333333333333"/></g>
<rect x="6" y="5" width="11" height="9" fill="#292929"/>
<rect x="5.2" y="6.3" width="7.5" height="7" fill="#0067b8" stroke="#6fb9f0" stroke-width="1.2"/>
<path d="M14.3 6.3 L20.7 13 M20.7 6.3 L14.3 13" stroke="#ea4c4c" stroke-width="1.6"/>
</svg><svg style="position:absolute;left:1408px;top:104px" width="22" height="24" viewBox="0 0 22 24"><g fill="none" stroke="#c8c8c8" stroke-width="1.6"><rect x="1.6" y="4.5" width="18.8" height="17.3"/>
<line x1="7.866666666666667" y1="4.5" x2="7.866666666666667" y2="21.8"/><line x1="14.133333333333333" y1="4.5" x2="14.133333333333333" y2="21.8"/>
<line x1="1.6" y1="10.266666666666666" x2="20.400000000000002" y2="10.266666666666666"/><line x1="1.6" y1="16.03333333333333" x2="20.400000000000002" y2="16.03333333333333"/></g>
<rect x="6.4" y="9.1" width="9.6" height="7.6" fill="#0067b8" stroke="#6fb9f0" stroke-width="1.4"/>
<line x1="4.5" y1="3.4" x2="17.5" y2="3.4" stroke="#3b9de3" stroke-width="1.6"/>
<line x1="4.5" y1="1.5" x2="4.5" y2="5.5" stroke="#3b9de3" stroke-width="1.6"/><line x1="17.5" y1="1.5" x2="17.5" y2="5.5" stroke="#3b9de3" stroke-width="1.6"/>
</svg><svg style="position:absolute;left:1545px;top:42px" width="18" height="20" viewBox="0 0 18 20"><path d="M16.8 3.5 V1.2 H1.3 L9 9.8 L1.3 18.2 H16.8 V16" fill="none" stroke="#cfcfcf" stroke-width="1.6" stroke-linejoin="miter"/></svg><svg style="position:absolute;left:1543px;top:74px" width="22" height="20" viewBox="0 0 22 20"><rect x="1.3" y="1.2" width="19" height="17.5" fill="none" stroke="#c8c8c8" stroke-width="1.6"/>
<line x1="1.3" y1="4.6" x2="20.3" y2="4.6" stroke="#c8c8c8" stroke-width="1.4"/>
<line x1="10.8" y1="7" x2="10.8" y2="15" stroke="#3b9de3" stroke-width="1.5"/><polyline points="7.3,11.5 10.8,15 14.3,11.5" fill="none" stroke="#3b9de3" stroke-width="1.5"/></svg><svg style="position:absolute;left:1543px;top:105px" width="22" height="22" viewBox="0 0 22 22"><path d="M13.3 1.5 L20.4 9.5 L10.3 20.3 L0.9 12.2 Z" fill="none" stroke="#c656c6" stroke-width="1.6" stroke-linejoin="round"/>
<path d="M0.9 12.2 L5.9 7.9 L14.3 16 L10.3 20.3 Z" fill="#b042b4" stroke="#c656c6" stroke-width="1.4" stroke-linejoin="round"/></svg><svg style="position:absolute;left:1607px;top:43px" width="16" height="36" viewBox="0 0 16 36"><path d="M1.6 16.5 L7.6 1.3 L13.6 16.5 M3.6 11.4 H11.6" fill="none" stroke="#3b9de3" stroke-width="1.7"/>
<path d="M2.5 19.8 H12.5 L2.2 33.6 H13" fill="none" stroke="#cfcfcf" stroke-width="1.6"/></svg><svg style="position:absolute;left:1622px;top:51px" width="23" height="22" viewBox="0 0 23 22"><path d="M1.7 1.3 H21.4 V3.8 L14.5 11 V20.3 H9 V11 L1.7 3.8 Z" fill="none" stroke="#cfcfcf" stroke-width="1.6" stroke-linejoin="miter"/></svg><svg style="position:absolute;left:1686px;top:42px" width="42" height="40" viewBox="0 0 42 40"><circle cx="26.4" cy="14.6" r="12.6" fill="none" stroke="#cfcfcf" stroke-width="1.6"/><line x1="17.2" y1="24.3" x2="3.4" y2="37.7" stroke="#cfcfcf" stroke-width="1.6"/></svg><svg style="position:absolute;left:1798px;top:42px" width="38" height="38" viewBox="0 0 38 38"><g fill="none" stroke="#cd4418" stroke-width="1.8">
<rect x="2.2" y="2" width="33.7" height="33.3"/>
<rect x="6.3" y="6" width="11.5" height="11.2"/><rect x="20.3" y="6" width="11.5" height="11.2"/>
<rect x="6.3" y="20.3" width="11.5" height="11.2"/><rect x="20.3" y="20.3" width="11.5" height="11.2"/></g></svg>
</body></html>
